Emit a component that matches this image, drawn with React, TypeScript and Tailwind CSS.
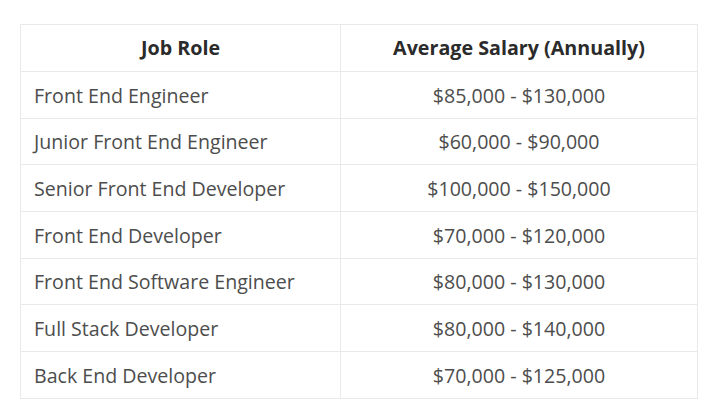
import React from "react";

const rows: [string, string][] = [
  ["Front End Engineer", "$85,000 - $130,000"],
  ["Junior Front End Engineer", "$60,000 - $90,000"],
  ["Senior Front End Developer", "$100,000 - $150,000"],
  ["Front End Developer", "$70,000 - $120,000"],
  ["Front End Software Engineer", "$80,000 - $130,000"],
  ["Full Stack Developer", "$80,000 - $140,000"],
  ["Back End Developer", "$70,000 - $125,000"],
];

export default function App() {
  return (
    <div className="w-[720px] h-[418px] bg-white pt-6 pl-5 font-['Open_Sans',sans-serif]">
      <table className="border-collapse table-fixed w-[678px]">
        <thead>
          <tr className="h-[47px]">
            <th className="w-[320px] border border-[#e9e9e9] text-[19.7px] font-bold text-[#2b2b2b] text-center">
              Job Role
            </th>
            <th className="border border-[#e9e9e9] text-[19.7px] font-bold text-[#2b2b2b] text-center">
              Average Salary (Annually)
            </th>
          </tr>
        </thead>
        <tbody>
          {rows.map(([role, salary]) => (
            <tr key={role} className="h-[46.7px]">
              <td className="border border-[#e9e9e9] px-[13px] pt-[1px] text-[19.6px] text-[#4d4d4d]">
                {role}
              </td>
              <td className="border border-[#e9e9e9] pt-[1px] text-[19.6px] text-[#4d4d4d] text-center">
                {salary}
              </td>
            </tr>
          ))}
        </tbody>
      </table>
    </div>
  );
}
